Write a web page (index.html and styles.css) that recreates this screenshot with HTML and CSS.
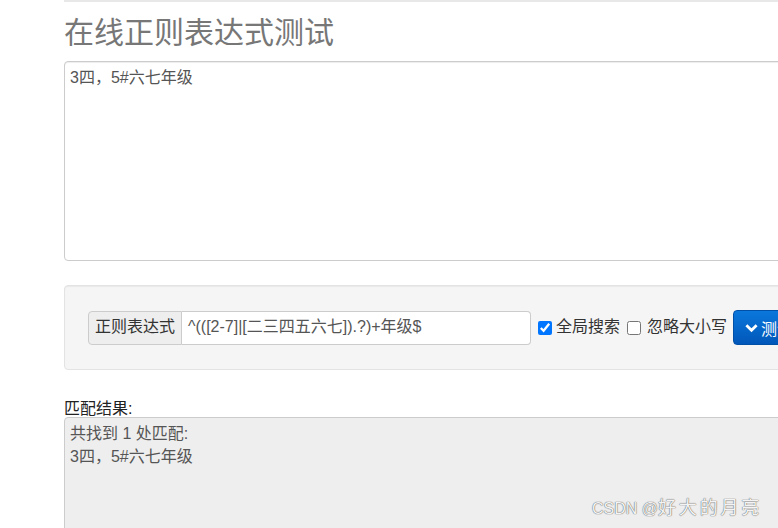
FILE: index.html
```html
<!DOCTYPE html>
<html lang="zh">
<head>
<meta charset="utf-8">
<link rel="stylesheet" href="styles.css">
</head>
<body>
<div class="page">
  <div class="topline"></div>
  <h1 class="title">在线正则表达式测试</h1>
  <div class="source">3四，5#六七年级</div>
  <div class="well">
    <div class="row">
      <div class="input-group">
        <span class="addon">正则表达式</span>
        <span class="field">^(([2-7]|[二三四五六七]).?)+年级$</span>
      </div>
      <label class="check"><input type="checkbox" checked>全局搜索</label>
      <label class="check"><input type="checkbox">忽略大小写</label>
      <button class="btn"><svg viewBox="0 0 14 10" width="13" height="10"><path d="M1.5 2l5.5 5.5L12.5 2" fill="none" stroke="#fff" stroke-width="3"/></svg>测试匹配</button>
    </div>
  </div>
  <div class="label">匹配结果:</div>
  <div class="result">共找到 1 处匹配:<br>3四，5#六七年级</div>
</div>
<div class="watermark">CSDN @<span class="wm-cjk">好大的月亮</span></div>
</body>
</html>
```
FILE: styles.css
```css
html, body {
  margin: 0;
  padding: 0;
  width: 778px;
  height: 528px;
  overflow: hidden;
  background: #fff;
  font-family: "Liberation Sans", "Noto Sans CJK SC", sans-serif;
  font-size: 16px;
  line-height: 1.42857;
  color: #333;
}
.page {
  padding-left: 64px;
  width: 900px;
}
.topline {
  height: 2px;
  background: #e8e8e8;
}
.title {
  margin: 0;
  height: 59px;
  padding-top: 11px;
  box-sizing: border-box;
  font-size: 30px;
  font-weight: normal;
  line-height: 40px;
  color: #777;
}
.source {
  height: 200px;
  box-sizing: border-box;
  border: 1px solid #ccc;
  border-radius: 4px;
  padding: 5px 5px;
  color: #555;
  box-shadow: inset 0 1px 1px rgba(0,0,0,.075);
}
.well {
  margin-top: 24px;
  height: 85px;
  box-sizing: border-box;
  background: #f5f5f5;
  border: 1px solid #e3e3e3;
  border-radius: 4px;
  padding: 24px 23px;
  box-shadow: inset 0 1px 1px rgba(0,0,0,.05);
}
.row {
  display: flex;
  align-items: center;
}
.input-group {
  display: flex;
  height: 34px;
}
.addon {
  display: flex;
  align-items: center;
  box-sizing: border-box;
  width: 94px;
  padding: 0 6px;
  background: #eee;
  border: 1px solid #ccc;
  border-radius: 4px 0 0 4px;
  color: #333;
  white-space: nowrap;
}
.field {
  display: flex;
  align-items: center;
  box-sizing: border-box;
  width: 349px;
  padding: 0 6px;
  background: #fff;
  border: 1px solid #ccc;
  border-left: 0;
  border-radius: 0 4px 4px 0;
  color: #555;
  white-space: nowrap;
}
.check {
  display: flex;
  align-items: center;
  color: #333;
  white-space: nowrap;
}
.check input {
  width: 14px;
  height: 14px;
  margin: 0 4px 0 7px;
}
.check + .check input {
  margin-left: 7px;
  margin-right: 6px;
}
.btn {
  margin-left: 6px;
  height: 35px;
  padding: 0 11px;
  border: 1px solid #0050a8;
  border-radius: 4px;
  background: linear-gradient(#0b77dc, #0157b9);
  color: #fff;
  font-family: inherit;
  font-size: 16px;
  display: flex;
  align-items: center;
  gap: 3px;
  white-space: nowrap;
}
.label {
  margin-top: 30px;
  line-height: 17px;
  color: #222;
}
.result {
  height: 200px;
  box-sizing: border-box;
  background: #eee;
  border: 1px solid #ccc;
  border-radius: 4px;
  padding: 5px 5px;
  color: #555;
}
.watermark {
  position: absolute;
  left: 592px;
  top: 497px;
  font-size: 16px;
  line-height: 22px;
  color: #f4f4f4;
  text-shadow: 0 0 1px #666, 0 0 1px #666;
  white-space: nowrap;
}
.wm-cjk {
  font-size: 18px;
  letter-spacing: 2.8px;
}
```
